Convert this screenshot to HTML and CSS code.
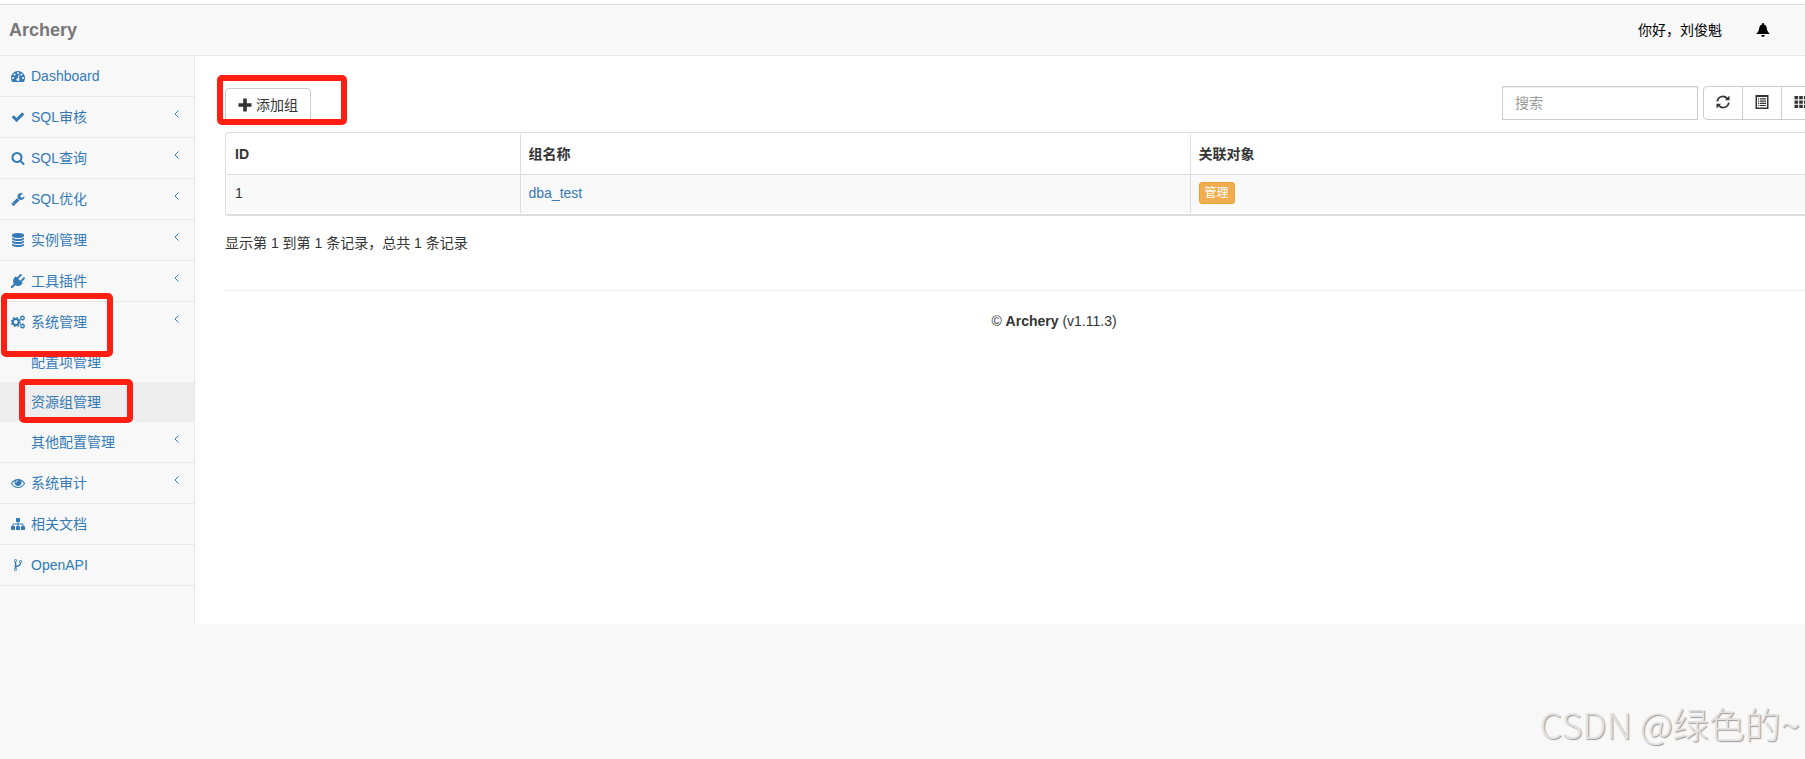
FILE: index.html
```html
<!DOCTYPE html>
<html lang="zh-CN">
<head>
<meta charset="utf-8">
<title>Archery</title>
<link rel="stylesheet" href="styles.css">
</head>
<body>
<header class="navbar">
  <a class="brand" href="#">Archery</a>
  <div class="nav-user">
    <a href="#">你好，刘俊魁</a>
    <a href="#" aria-label="通知"><svg class="icon" viewBox="0 0 14 14"><path d="M7 0c.6 0 1 .4 1 1v.4c1.700.5 2.600 1.900 2.800 3.600.3 2.500.9 4 2.500 5.200.4.3.3.9-.3.9H1c-.6 0-.7-.6-.3-.9C2.300 9 2.900 7.500 3.200 5 3.400 3.300 4.300 1.900 6 1.400V1c0-.6.4-1 1-1zM5.200 12h3.600c-.1 1.100-.8 1.900-1.800 1.900S5.300 13.100 5.200 12z"/></svg></a>
  </div>
</header>
<div class="page">
  <nav class="sidebar">
    <ul class="menu">
      <li><a href="#"><svg class="icon" viewBox="0 0 1792 1792"><path d="M384 1152q0-53-37.500-90.500t-90.500-37.500-90.500 37.500-37.500 90.500 37.500 90.500 90.500 37.500 90.500-37.500 37.500-90.500zm192-448q0-53-37.500-90.500t-90.500-37.500-90.500 37.500-37.500 90.500 37.500 90.500 90.500 37.500 90.500-37.500 37.500-90.500zm428 481l101-382q6-26-7.500-48.500t-38.500-29.500-48 6.500-30 39.500l-101 382q-60 5-107 43.500t-63 98.500q-20 77 20 146t117 89 146-20 89-117q16-60-6-117t-72-91zm660-33q0-53-37.500-90.500t-90.500-37.500-90.500 37.500-37.500 90.500 37.500 90.500 90.500 37.500 90.500-37.500 37.500-90.500zm-640-640q0-53-37.500-90.500t-90.500-37.500-90.500 37.500-37.500 90.500 37.500 90.500 90.500 37.500 90.500-37.500 37.500-90.500zm448 192q0-53-37.500-90.500t-90.500-37.500-90.500 37.500-37.500 90.500 37.500 90.500 90.500 37.500 90.500-37.500 37.500-90.500zm320 448q0 261-141 483-19 29-54 29h-1402q-35 0-54-29-141-221-141-483 0-182 71-348t191-286 286-191 348-71 348 71 286 191 191 286 71 348z"/></svg>Dashboard</a></li>
      <li><a href="#"><svg class="icon" viewBox="0 0 1792 1792"><path d="M1671 566q0 40-28 68l-724 724-136 136q-28 28-68 28t-68-28l-136-136-362-362q-28-28-28-68t28-68l136-136q28-28 68-28t68 28l294 295 656-657q28-28 68-28t68 28l136 136q28 28 28 68z"/></svg>SQL审核<svg class="arrow" viewBox="0 0 5 8"><path d="M4.500.5L1 4l3.500 3.500"/></svg></a></li>
      <li><a href="#"><svg class="icon" viewBox="0 0 1792 1792"><path d="M1216 832q0-185-131.500-316.500t-316.500-131.500-316.500 131.500-131.500 316.500 131.500 316.500 316.500 131.500 316.500-131.500 131.500-316.500zm512 832q0 52-38 90t-90 38q-54 0-90-38l-343-342q-179 124-399 124-143 0-273.500-55.500t-225-150-150-225-55.500-273.500 55.500-273.500 150-225 225-150 273.500-55.500 273.500 55.500 225 150 150 225 55.500 273.500q0 220-124 399l343 343q37 37 37 90z"/></svg>SQL查询<svg class="arrow" viewBox="0 0 5 8"><path d="M4.500.5L1 4l3.500 3.500"/></svg></a></li>
      <li><a href="#"><svg class="icon" viewBox="0 0 1792 1792"><path d="M448 1472q0-26-19-45t-45-19-45 19-19 45 19 45 45 19 45-19 19-45zm644-420l-682 682q-37 37-90 37-52 0-91-37l-106-108q-38-36-38-90 0-53 38-91l681-681q39 98 114.500 173.500t173.500 114.500zm634-435q0 39-23 106-47 134-164.500 217.500t-258.500 83.500q-185 0-316.500-131.500t-131.500-316.500 131.500-316.500 316.500-131.500q58 0 121.500 16.500t107.500 46.500q16 11 16 28t-16 28l-293 169v224l193 107q5-3 79-48.500t135.500-81 70.500-35.500q15 0 23.500 10t8.500 25z"/></svg>SQL优化<svg class="arrow" viewBox="0 0 5 8"><path d="M4.500.5L1 4l3.500 3.500"/></svg></a></li>
      <li><a href="#"><svg class="icon" viewBox="0 0 1792 1792"><path d="M896 768q237 0 443-43t325-127v170q0 69-103 128t-280 93.500-385 34.500-385-34.500-280-93.500-103-128v-170q119 84 325 127t443 43zm0 768q237 0 443-43t325-127v170q0 69-103 128t-280 93.500-385 34.500-385-34.500-280-93.500-103-128v-170q119 84 325 127t443 43zm0-384q237 0 443-43t325-127v170q0 69-103 128t-280 93.500-385 34.500-385-34.500-280-93.500-103-128v-170q119 84 325 127t443 43zm0-1152q208 0 385 34.500t280 93.500 103 128v128q0 69-103 128t-280 93.500-385 34.500-385-34.500-280-93.500-103-128v-128q0-69 103-128t280-93.500 385-34.500z"/></svg>实例管理<svg class="arrow" viewBox="0 0 5 8"><path d="M4.500.5L1 4l3.500 3.500"/></svg></a></li>
      <li><a href="#"><svg class="icon" viewBox="0 0 1792 1792"><path d="M1755 453q37 38 37 90.500t-37 90.500l-401 400 150 150-160 160q-163 163-389.500 186.500t-411.500-100.500l-362 362h-181v-181l362-362q-124-185-100.500-411.500t186.500-389.500l160-160 150 150 400-401q38-37 91-37t90 37 37 90.500-37 90.500l-400 401 234 234 401-400q38-37 91-37t90 37z"/></svg>工具插件<svg class="arrow" viewBox="0 0 5 8"><path d="M4.500.5L1 4l3.500 3.500"/></svg></a></li>
      <li>
        <a href="#"><svg class="icon" viewBox="0 0 14 14"><g fill="none" stroke="currentColor"><circle cx="4.800" cy="7" r="2.900" stroke-width="2"/><circle cx="4.800" cy="7" r="4.300" stroke-width="1.600" stroke-dasharray="1.690 1.690"/><circle cx="11.500" cy="3" r="1.600" stroke-width="1.200"/><circle cx="11.500" cy="3" r="2.300" stroke-width="1" stroke-dasharray="1.200 1.200"/><circle cx="11.500" cy="11" r="1.600" stroke-width="1.200"/><circle cx="11.500" cy="11" r="2.300" stroke-width="1" stroke-dasharray="1.200 1.200"/></g></svg>系统管理<svg class="arrow" viewBox="0 0 5 8"><path d="M4.500.5L1 4l3.500 3.500"/></svg></a>
        <ul class="submenu">
          <li><a href="#">配置项管理</a></li>
          <li><a class="active" href="#">资源组管理</a></li>
          <li><a href="#">其他配置管理<svg class="arrow" viewBox="0 0 5 8"><path d="M4.500.5L1 4l3.500 3.500"/></svg></a></li>
        </ul>
      </li>
      <li><a href="#"><svg class="icon" viewBox="0 0 1792 1792"><path d="M1664 960q-152-236-381-353 61 104 61 225 0 185-131.500 316.500t-316.500 131.500-316.500-131.500-131.500-316.500q0-121 61-225-229 117-381 353 133 205 333.500 326.500t434.500 121.500 434.500-121.500 333.500-326.500zm-720-384q0-20-14-34t-34-14q-125 0-214.500 89.500t-89.500 214.500q0 20 14 34t34 14 34-14 14-34q0-86 61-147t147-61q20 0 34-14t14-34zm848 384q0 34-20 69-140 230-376.500 368.500t-499.500 138.500-499.500-139-376.500-368q-20-35-20-69t20-69q140-229 376.500-368t499.500-139 499.500 139 376.500 368q20 35 20 69z"/></svg>系统审计<svg class="arrow" viewBox="0 0 5 8"><path d="M4.500.5L1 4l3.500 3.500"/></svg></a></li>
      <li><a href="#"><svg class="icon" viewBox="0 0 1792 1792"><path d="M1792 1248v320q0 40-28 68t-68 28h-320q-40 0-68-28t-28-68v-320q0-40 28-68t68-28h96v-192h-512v192h96q40 0 68 28t28 68v320q0 40-28 68t-68 28h-320q-40 0-68-28t-28-68v-320q0-40 28-68t68-28h96v-192h-512v192h96q40 0 68 28t28 68v320q0 40-28 68t-68 28h-320q-40 0-68-28t-28-68v-320q0-40 28-68t68-28h96v-192q0-52 38-90t90-38h512v-192h-96q-40 0-68-28t-28-68v-320q0-40 28-68t68-28h320q40 0 68 28t28 68v320q0 40-28 68t-68 28h-96v192h512q52 0 90 38t38 90v192h96q40 0 68 28t28 68z"/></svg>相关文档</a></li>
      <li><a href="#"><svg class="icon" viewBox="0 0 1792 1792"><path d="M672 1472q0-40-28-68t-68-28-68 28-28 68 28 68 68 28 68-28 28-68zm0-1152q0-40-28-68t-68-28-68 28-28 68 28 68 68 28 68-28 28-68zm640 128q0-40-28-68t-68-28-68 28-28 68 28 68 68 28 68-28 28-68zm96 0q0 52-26 96.500t-70 69.500q-2 287-226 414-67 38-203 81-128 40-169.500 71t-41.500 100v26q44 25 70 69.500t26 96.500q0 80-56 136t-136 56-136-56-56-136q0-52 26-96.500t70-69.500v-820q-44-25-70-69.500t-26-96.500q0-80 56-136t136-56 136 56 56 136q0 52-26 96.500t-70 69.500v497q54-26 154-57 55-17 87.500-29.500t70.500-31 59-39.500 40.500-51 28-69.500 8.500-91.500q-44-25-70-69.500t-26-96.500q0-80 56-136t136-56 136 56 56 136z"/></svg>OpenAPI</a></li>
    </ul>
  </nav>
  <main class="content">
    <div class="toolbar">
      <button class="btn add" type="button"><svg class="icon" viewBox="0 0 14 14"><path d="M5.200.5h3.600v4.700h4.700v3.600H8.800v4.700H5.200V8.800H.5V5.200h4.700z"/></svg>添加组</button>
      <div class="tools">
        <input class="search" type="text" placeholder="搜索" aria-label="搜索">
        <div class="btn-group">
          <button class="btn tool" type="button" aria-label="刷新"><svg class="icon" viewBox="0 0 14 14"><g fill="none" stroke="currentColor" stroke-width="1.700"><path d="M1.300 6.500A5.500 5.500 0 0 1 11 3.400"/><path d="M12.700 7.500A5.500 5.500 0 0 1 3 10.600"/></g><path d="M13.500.6v4.600H8.900zM.5 13.400V8.800h4.600z"/></svg></button>
          <button class="btn tool" type="button" aria-label="切换"><svg class="icon" viewBox="0 0 14 14"><path fill-rule="evenodd" d="M.5 0h13v14H.5zM2 2v10.600h10V2z"/><path d="M3 3.300h1.200v1.200H3zM5 3.300h6v1.200H5zM3 5.500h1.200v1.200H3zM5 5.500h6v1.200H5zM3 7.700h1.200v1.200H3zM5 7.700h6v1.200H5zM3 9.900h1.200v1.200H3zM5 9.900h6v1.200H5z"/></svg></button>
          <button class="btn tool wide" type="button" aria-label="列"><svg class="icon" viewBox="0 0 14 14"><path d="M.5 1h3.600v3.300H.5zM5.200 1h3.600v3.300H5.200zM9.900 1h3.600v3.300H9.900zM.5 5.400h3.600v3.300H.5zM5.200 5.400h3.600v3.300H5.200zM9.900 5.400h3.600v3.300H9.900zM.5 9.800h3.600v3.300H.5zM5.200 9.800h3.600v3.300H5.200zM9.900 9.800h3.600v3.300H9.900z"/></svg></button>
        </div>
      </div>
    </div>
    <div class="table-box">
      <table class="groups">
        <colgroup><col class="col-id"><col class="col-name"><col></colgroup>
        <thead><tr><th>ID</th><th>组名称</th><th>关联对象</th></tr></thead>
        <tbody><tr><td>1</td><td><a href="#">dba_test</a></td><td><button class="manage" type="button">管理</button></td></tr></tbody>
      </table>
    </div>
    <p class="summary">显示第 1 到第 1 条记录，总共 1 条记录</p>
    <footer class="footer">© <b>Archery</b> (v1.11.3)</footer>
  </main>
</div>
<div class="mark mark-add"></div>
<div class="mark mark-system"></div>
<div class="mark mark-group"></div>
<div class="watermark">CSDN @绿色的~</div>
</body>
</html>
```
FILE: styles.css
```css
* { box-sizing: border-box; }

body {
  position: relative;
  min-height: 100vh;
  margin: 0;
  overflow: hidden;
  border-top: 4px solid #fff;
  background: #f8f8f8;
  color: #333;
  font: 14px/20px "Liberation Sans", "Noto Sans CJK SC", sans-serif;
}

a { color: #337ab7; text-decoration: none; }
button, input { font: inherit; }

.icon { width: 14px; height: 14px; flex: none; fill: currentColor; }

.navbar {
  display: flex;
  align-items: center;
  justify-content: space-between;
  height: 52px;
  padding: 0 35px 0 9px;
  border-top: 1px solid #e0e0e0;
  border-bottom: 1px solid #e7e7e7;
}
.brand { color: #777; font-size: 18px; font-weight: bold; }
.nav-user { display: flex; align-items: center; gap: 34px; }
.nav-user a { display: flex; color: #000; }

.page { display: flex; }

.sidebar {
  flex: none;
  width: 195px;
  padding-bottom: 38px;
  border-right: 1px solid #e7e7e7;
}
.menu, .submenu { margin: 0; padding: 0; list-style: none; }
.menu > li { border-bottom: 1px solid #e7e7e7; }
.menu a {
  display: flex;
  align-items: center;
  height: 40px;
  padding: 0 15px 0 11px;
}
.menu .icon { margin-right: 6px; }
.menu .submenu a { padding-left: 31px; }
.menu .active { background: #eee; }
.arrow {
  width: 5px;
  height: 8px;
  margin: 0 0 6px auto;
  fill: none;
  stroke: currentColor;
}

/* The content area is wider than the window; the body clips its right side. */
.content {
  flex: 1;
  min-width: 0;
  margin-right: -108px;
  padding: 30px 30px 0;
  background: #fff;
}

.toolbar {
  display: flex;
  align-items: flex-end;
  justify-content: space-between;
  margin-bottom: 10px;
}
.btn {
  display: flex;
  align-items: center;
  justify-content: center;
  height: 34px;
  border: 1px solid #ccc;
  border-radius: 4px;
  background: #fff;
  color: #333;
}
.add { gap: 4px; padding: 0 12px; }
.tools { display: flex; gap: 5px; padding: 0 51px 2px 0; }
.search {
  width: 196px;
  height: 34px;
  padding: 0 12px;
  border: 1px solid #ccc;
  background: #fff;
  box-shadow: inset 0 1px 1px #eee;
}
.search::placeholder { color: #999; opacity: 1; }
.btn-group { display: flex; }
.tool { width: 40px; padding: 0 0 3px; border-radius: 0; }
.tool + .tool { margin-left: -1px; }
.tool:first-child { border-radius: 4px 0 0 4px; }
.wide { width: 51px; justify-content: flex-start; padding-left: 12px; }

.table-box {
  padding: 1px;
  border: 1px solid #ddd;
  border-bottom-width: 2px;
  border-radius: 4px;
}
.groups { width: 100%; border-collapse: collapse; table-layout: fixed; }
.col-id { width: 293px; }
.col-name { width: 670px; }
.groups th, .groups td { padding: 8px; text-align: left; }
.groups th { height: 40px; border-bottom: 1px solid #ddd; }
.groups td { height: 38px; padding: 7px 8px 9px; background: #f9f9f9; }
.groups th + th, .groups td + td { border-left: 1px solid #ddd; }
.manage {
  display: block;
  height: 22px;
  padding: 0 5px;
  border: 1px solid #eea236;
  border-radius: 3px;
  background: #f0ad4e;
  color: #fff;
  font-size: 12px;
  line-height: 18px;
}

.summary { margin: 17px 0 37px; }
.footer { padding-top: 20px; border-top: 1px solid #eee; text-align: center; }

/* Annotations drawn over the page */
.mark { position: absolute; border: 6px solid #ff1f12; border-radius: 5px; }
.mark-add { top: 71px; left: 217px; width: 130px; height: 50px; }
.mark-system { top: 289px; left: 1px; width: 112px; height: 64px; }
.mark-group { top: 375px; left: 19px; width: 114px; height: 44px; }

.watermark {
  position: absolute;
  right: 5px;
  bottom: 12px;
  color: #e2e2e2;
  font: 300 36px/48px "Noto Sans CJK SC", sans-serif;
  text-shadow: 1px 1px 1px #999;
}
```
